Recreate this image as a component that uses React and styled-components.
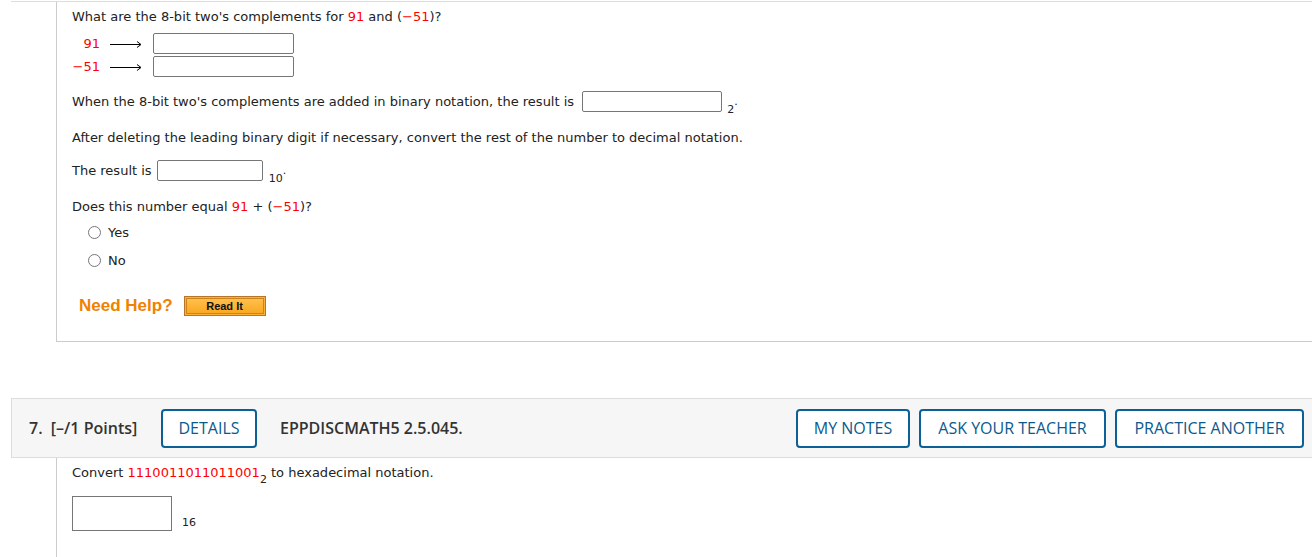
import React from "react";
import styled, { createGlobalStyle } from "styled-components";

const GlobalStyle = createGlobalStyle`
  html, body {
    margin: 0;
    padding: 0;
    background: #ffffff;
  }
  body {
    font-family: "DejaVu Sans", Verdana, sans-serif;
    font-size: 13px;
    color: #222;
  }
`;

const Page = styled.div`
  width: 1312px;
  height: 557px;
  overflow: hidden;
  padding-top: 1px;
  box-sizing: border-box;
`;

const PrevHeaderEdge = styled.div`
  margin-left: 11px;
  height: 1px;
  background: #dddddd;
`;

const Panel = styled.div`
  margin-left: 56px;
  border-left: 1px solid #cccccc;
  border-bottom: ${(p) => (p.$open ? "none" : "1px solid #cccccc")};
  padding: ${(p) => p.$pad};
  height: ${(p) => p.$height};
  box-sizing: border-box;
`;

const Line = styled.div`
  display: flex;
  align-items: center;
  line-height: 16px;
  margin-top: ${(p) => p.$top ?? 0}px;
  white-space: nowrap;
`;

const Red = styled.span`
  color: #ff0000;
`;

const Row = styled.div`
  display: flex;
  align-items: center;
  height: 23px;
`;

const NumLabel = styled.span`
  width: 28px;
  text-align: right;
  color: #ff0000;
`;

const Arrow = styled.svg`
  margin-left: 10px;
  width: 32px;
  height: 10px;
`;

const Box = styled.span`
  display: inline-block;
  box-sizing: border-box;
  flex-shrink: 0;
  width: ${(p) => p.$w}px;
  height: ${(p) => p.$h ?? 21}px;
  border: 1px solid #767676;
  border-radius: ${(p) => (p.$square ? 0 : 2)}px;
  background: #fff;
  margin-left: ${(p) => p.$ml ?? 0}px;
`;

const Sub = styled.span`
  font-size: 11px;
  align-self: flex-end;
  margin-left: ${(p) => p.$ml ?? 5}px;
  margin-bottom: ${(p) => p.$mb ?? -4}px;
  line-height: 12px;
`;

const RadioGroup = styled.div`
  display: flex;
  flex-direction: column;
  gap: 8px;
  margin-top: 7px;
`;

const RadioRow = styled.label`
  display: flex;
  align-items: center;
  height: 20px;
  padding-left: 16px;
`;

const Radio = styled.span`
  width: 13px;
  height: 13px;
  border: 1px solid #767676;
  border-radius: 50%;
  box-sizing: border-box;
  margin-right: 7px;
`;

const HelpRow = styled.div`
  display: flex;
  align-items: center;
  height: 22px;
  margin-top: 25px;
  padding-left: 7px;
`;

const HelpTitle = styled.span`
  font-family: "Liberation Sans", Arial, sans-serif;
  font-weight: bold;
  font-size: 17px;
  color: #ef8200;
  margin-right: 11px;
`;

const ReadIt = styled.button`
  width: 82px;
  height: 20px;
  padding: 1px;
  border: 1px solid #b5762a;
  background: #fbb03b;
  box-sizing: border-box;
  font-family: "Liberation Sans", Arial, sans-serif;
  font-weight: bold;
  font-size: 11px;
  color: #111;
  & span {
    display: flex;
    align-items: center;
    justify-content: center;
    height: 100%;
    border: 1px solid #d08418;
    background: linear-gradient(#ffc04d, #f9a823);
    box-sizing: border-box;
  }
`;

const Gap = styled.div`
  height: ${(p) => p.$h}px;
`;

const HeaderBar = styled.div`
  margin-left: 11px;
  height: 60px;
  box-sizing: border-box;
  border: 1px solid #dddddd;
  border-right: none;
  background: #f6f6f6;
  display: flex;
  align-items: center;
  padding: 0 8px 0 16px;
  font-family: "Open Sans", sans-serif;
  font-size: 16px;
`;

const QNum = styled.span`
  font-weight: 600;
  color: #333;
  width: 133px;
  flex-shrink: 0;
  padding-left: 1px;
  box-sizing: border-box;
  white-space: pre;
`;

const Code = styled.span`
  font-weight: 600;
  color: #333;
  margin-left: 23px;
  flex: 1;
  white-space: nowrap;
`;

const HeadButton = styled.button`
  height: 39px;
  padding: 0;
  border: 2px solid #0b6197;
  border-radius: 4px;
  background: #ffffff;
  color: #0b5a8c;
  font-family: "Open Sans", sans-serif;
  font-size: 16px;
  font-weight: 500;
  white-space: nowrap;
  flex-shrink: 0;
  box-sizing: border-box;
  width: ${(p) => p.$w}px;
  margin-left: ${(p) => p.$ml ?? 0}px;
`;

const Tail = styled.div`
  display: flex;
  align-items: center;
  margin-top: 15px;
`;

function RightArrow() {
  return (
    <Arrow viewBox="0 0 32 10">
      <path d="M0 5.5 H30.5" stroke="#000" strokeWidth="1" />
      <path d="M27 2.5 L31 5.5 L27 8.5" fill="none" stroke="#000" strokeWidth="1" />
    </Arrow>
  );
}

export default function App() {
  return (
    <Page>
      <GlobalStyle />
      <PrevHeaderEdge />
      <Panel $pad="7px 15px 0" $height="340px">
        <Line>
          What are the 8-bit two's complements for&nbsp;<Red>91</Red>&nbsp;and (<Red>−51</Red>)?
        </Line>
        <Gap $h={7} />
        <Row>
          <NumLabel>91</NumLabel>
          <RightArrow />
          <Box $w={141} $ml={11} />
        </Row>
        <Row>
          <NumLabel>−51</NumLabel>
          <RightArrow />
          <Box $w={141} $ml={11} />
        </Row>
        <Line $top={13}>
          When the 8-bit two's complements are added in binary notation, the result is&nbsp;
          <Box $w={140} $ml={4} />
          <Sub>2</Sub>
          <Sub $ml={0} $mb={4}>.</Sub>
        </Line>
        <Line $top={18}>
          After deleting the leading binary digit if necessary, convert the rest of the number to decimal notation.
        </Line>
        <Line $top={14}>
          The result is&nbsp;
          <Box $w={106} $ml={1} />
          <Sub $ml={6}>10</Sub>
          <Sub $ml={0} $mb={4}>.</Sub>
        </Line>
        <Line $top={18}>
          Does this number equal&nbsp;<Red>91</Red>&nbsp;+ (<Red>−51</Red>)?
        </Line>
        <RadioGroup>
          <RadioRow>
            <Radio />
            Yes
          </RadioRow>
          <RadioRow>
            <Radio />
            No
          </RadioRow>
        </RadioGroup>
        <HelpRow>
          <HelpTitle>Need Help?</HelpTitle>
          <ReadIt>
            <span>Read It</span>
          </ReadIt>
        </HelpRow>
      </Panel>
      <Gap $h={56} />
      <HeaderBar>
        <QNum>{"7.  [–/1 Points]"}</QNum>
        <HeadButton $w={96}>DETAILS</HeadButton>
        <Code>EPPDISCMATH5 2.5.045.</Code>
        <HeadButton $w={114}>MY NOTES</HeadButton>
        <HeadButton $w={187} $ml={9}>ASK YOUR TEACHER</HeadButton>
        <HeadButton $w={189} $ml={9}>PRACTICE ANOTHER</HeadButton>
      </HeaderBar>
      <Panel $open $pad="7px 15px 0" $height="100px">
        <Line>
          Convert&nbsp;
          <Red>1110011011011001</Red>
          <Sub $ml={0} $mb={-5}>2</Sub>
          &nbsp;to hexadecimal notation.
        </Line>
        <Tail>
          <Box $w={100} $h={35} $square />
          <Sub $ml={10} $mb={2}>16</Sub>
        </Tail>
      </Panel>
    </Page>
  );
}
